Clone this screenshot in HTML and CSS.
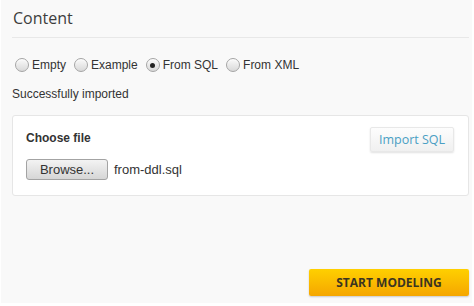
FILE: index.html
```html
<!DOCTYPE html>
<html lang="en">
<head>
    <meta charset="UTF-8">
    <meta name="viewport" content="width=device-width, initial-scale=1.0">
    <title>Content</title>
    <link rel="stylesheet" href="styles.css">
</head>
<body>

    <div class="panel">
        <h2 class="title">Content</h2>

        <!-- Source type -->
        <div class="options">
            <label class="option"><input type="radio" name="source" value="empty"> Empty</label>
            <label class="option"><input type="radio" name="source" value="example"> Example</label>
            <label class="option"><input type="radio" name="source" value="sql" checked> From SQL</label>
            <label class="option"><input type="radio" name="source" value="xml"> From XML</label>
        </div>

        <p class="status">Successfully imported</p>

        <!-- Import box -->
        <div class="card">
            <div class="card-head">
                <h3>Choose file</h3>
                <button class="btn-import">Import SQL</button>
            </div>
            <div class="file-row">
                <button class="btn-browse">Browse...</button>
                <span class="file-name">from-ddl.sql</span>
            </div>
        </div>

        <div class="footer">
            <button class="btn-start">START MODELING</button>
        </div>
    </div>

</body>
</html>
```

FILE: styles.css
```css
* {
    margin: 0;
    padding: 0;
    box-sizing: border-box;
}
body {
    background: #fff;
    font-family: "Liberation Sans", Arial, sans-serif;
    font-size: 13px;
    color: #333;
}
.panel {
    margin: 0 2px 0 1px;
    height: 303px;
    padding: 0 3px 0 11px;
    background: #f9f9f9;
}
.title {
    font-family: "Open Sans", sans-serif;
    font-size: 16px;
    font-weight: 400;
    line-height: 20px;
    color: #3d3d3d;
    padding: 8px 0 9px 1px;
    border-bottom: 1px solid #e8e8e8;
}
.options {
    display: flex;
    align-items: center;
    height: 16px;
    margin-top: 19px;
    font-size: 12px;
    line-height: 16px;
}
.option {
    display: flex;
    align-items: center;
    margin-right: 5px;
}
.option input {
    appearance: none;
    width: 14px;
    height: 14px;
    margin: 0 3px 0 3px;
    border: 1px solid #a5a5a5;
    border-radius: 50%;
    background: linear-gradient(#fafafa, #d9d9d9);
    box-shadow: inset 0 1px 1px rgba(255, 255, 255, 0.8);
    position: relative;
}
.option input:checked::after {
    content: "";
    position: absolute;
    left: 3.5px;
    top: 3.5px;
    width: 5px;
    height: 5px;
    border-radius: 50%;
    background: #222;
}
.status {
    margin-top: 13px;
    font-size: 12px;
    line-height: 16px;
}
.card {
    margin-top: 13px;
    background: #fff;
    border: 1px solid #e6e6e6;
    border-radius: 3px;
    padding: 11px 14px 15px 13px;
}
.card-head {
    display: flex;
    justify-content: space-between;
    align-items: flex-start;
}
.card-head h3 {
    font-size: 12px;
    font-weight: bold;
    line-height: 16px;
    margin-top: 3px;
    color: #333;
}
.btn-import {
    width: 84px;
    height: 25px;
    font-family: "Open Sans", sans-serif;
    font-size: 12.5px;
    color: #4a9fc4;
    background: linear-gradient(#fdfdfd, #f0f0f0);
    border: 1px solid #e8e8e8;
    border-radius: 2px;
    box-shadow: 0 1px 2px rgba(0, 0, 0, 0.12);
    cursor: pointer;
}
.file-row {
    display: flex;
    align-items: center;
    margin-top: 7px;
}
.btn-browse {
    width: 82px;
    height: 21px;
    font-family: "Liberation Sans", Arial, sans-serif;
    font-size: 13px;
    color: #333;
    background: linear-gradient(#f3f3f3, #d6d6d6);
    border: 1px solid #a3a3a3;
    border-radius: 3px;
    cursor: pointer;
}
.file-name {
    margin-left: 6px;
}
.footer {
    display: flex;
    justify-content: flex-end;
    margin-top: 73px;
}
.btn-start {
    width: 160px;
    height: 27px;
    font-family: "Open Sans", sans-serif;
    font-size: 12px;
    font-weight: bold;
    color: #3b3520;
    background: linear-gradient(#ffd000, #f5a600);
    border: none;
    border-radius: 2px;
    box-shadow: 0 1px 2px rgba(0, 0, 0, 0.2);
    cursor: pointer;
}
```
